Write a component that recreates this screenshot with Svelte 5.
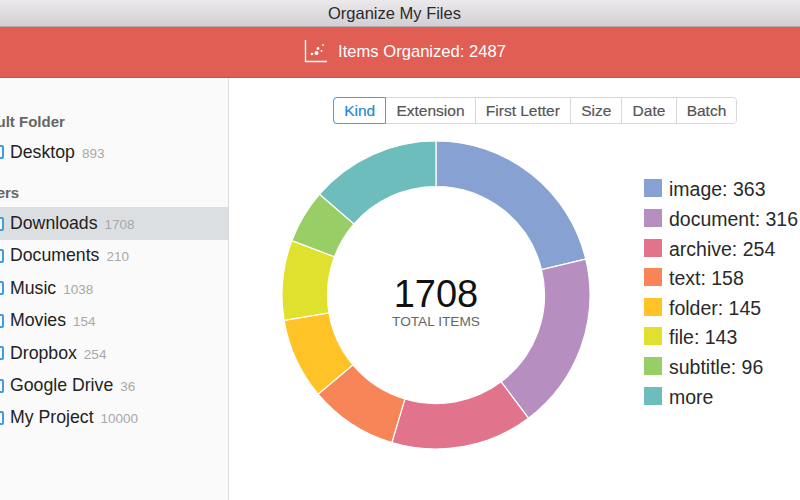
<script lang="ts">
	const kinds = [
		{ label: 'image: 363', n: 363, color: '#87a1d3' },
		{ label: 'document: 316', n: 316, color: '#b68ec0' },
		{ label: 'archive: 254', n: 254, color: '#e2738c' },
		{ label: 'text: 158', n: 158, color: '#f78557' },
		{ label: 'folder: 145', n: 145, color: '#ffc327' },
		{ label: 'file: 143', n: 143, color: '#e0e02f' },
		{ label: 'subtitle: 96', n: 96, color: '#99cd65' },
		{ label: 'more', n: 233, color: '#6cbdbc' }
	];
	const tabs = ['Kind', 'Extension', 'First Letter', 'Size', 'Date', 'Batch'];
	const folders = [
		{ name: 'Downloads', count: 1708, active: true },
		{ name: 'Documents', count: 210 },
		{ name: 'Music', count: 1038 },
		{ name: 'Movies', count: 154 },
		{ name: 'Dropbox', count: 254 },
		{ name: 'Google Drive', count: 36 },
		{ name: 'My Project', count: 10000 }
	];

	const total = 1708;
	const C = 155;
	const R = 154;
	const r = 108.5;

	function pt(rad: number, deg: number) {
		const a = (deg * Math.PI) / 180;
		return `${(C + rad * Math.sin(a)).toFixed(2)} ${(C - rad * Math.cos(a)).toFixed(2)}`;
	}

	let acc = 0;
	const slices = kinds.map((k) => {
		const from = (acc / total) * 360;
		acc += k.n;
		const to = (acc / total) * 360;
		const large = to - from > 180 ? 1 : 0;
		return {
			color: k.color,
			d: `M${pt(R, from)} A${R} ${R} 0 ${large} 1 ${pt(R, to)} L${pt(r, to)} A${r} ${r} 0 ${large} 0 ${pt(r, from)} Z`
		};
	});
</script>

<div class="window">
	<header class="titlebar">Organize My Files</header>
	<div class="banner">
		<svg class="scatter" width="24" height="24" viewBox="0 0 24 24">
			<path d="M1.5 1v21.5H23" fill="none" stroke="#fff" stroke-width="1.4" />
			<circle cx="8" cy="15" r="1.3" fill="#fff" />
			<circle cx="12.5" cy="14" r="2" fill="#fff" />
			<circle cx="14" cy="9.5" r="1.4" fill="#fff" />
			<circle cx="17.5" cy="12" r="0.9" fill="#fff" />
			<circle cx="19" cy="6" r="0.9" fill="#fff" />
		</svg>
		<span>Items Organized: 2487</span>
	</div>
	<div class="body">
		<aside class="sidebar">
			<h3 class="default-head">Default Folder</h3>
			<div class="row">
				<i class="box"></i><span class="name">Desktop</span><span class="count">893</span>
			</div>
			<h3 class="folders-head">Folders</h3>
			{#each folders as f}
				<div class="row" class:active={f.active}>
					<i class="box"></i><span class="name">{f.name}</span><span class="count">{f.count}</span>
				</div>
			{/each}
		</aside>
		<main class="content">
			<div class="tabs">
				{#each tabs as t, i}
					<button class="tab" class:on={i === 0}>{t}</button>
				{/each}
			</div>
			<div class="chart-row">
				<div class="donut">
					<svg width="310" height="310" viewBox="0 0 310 310">
						{#each slices as s}
							<path d={s.d} fill={s.color} stroke="#fff" stroke-width="1.2" />
						{/each}
					</svg>
					<div class="center">
						<span class="big">1708</span>
						<span class="small">TOTAL ITEMS</span>
					</div>
				</div>
				<ul class="legend">
					{#each kinds as k}
						<li><i style="background: {k.color}"></i><span>{k.label}</span></li>
					{/each}
				</ul>
			</div>
		</main>
	</div>
</div>

<style>
	:global(body) {
		margin: 0;
		background: #fff;
	}
	.window {
		width: 800px;
		height: 500px;
		overflow: hidden;
		display: flex;
		flex-direction: column;
		font-family: 'Liberation Sans', Arial, sans-serif;
		color: #222;
	}
	.titlebar {
		height: 27px;
		flex: none;
		box-sizing: border-box;
		padding-right: 11px;
		display: flex;
		align-items: center;
		justify-content: center;
		font-size: 16.5px;
		color: #2b2b2b;
		background: linear-gradient(#ebe9eb, #d2d0d2);
		border-bottom: 1px solid #b5b0ae;
	}
	.banner {
		height: 51px;
		flex: none;
		box-sizing: border-box;
		display: flex;
		align-items: center;
		justify-content: center;
		gap: 10px;
		padding-left: 10px;
		background: #e05e54;
		border-bottom: 1px solid #cf5148;
		color: #fff;
		font-size: 16.6px;
	}
	.scatter {
		margin-top: -2px;
	}
	.body {
		flex: 1;
		display: flex;
		min-height: 0;
	}
	.sidebar {
		width: 229px;
		flex: none;
		box-sizing: border-box;
		overflow: hidden;
		background: #fafafa;
		border-right: 1px solid #dcdcdc;
	}
	h3 {
		margin: 0;
		font-size: 15px;
		font-weight: bold;
		color: #666;
		white-space: nowrap;
		line-height: 16px;
	}
	.default-head {
		margin: 36px 0 0 -36px;
	}
	.folders-head {
		margin: 17px 0 6px -35px;
	}
	.row {
		height: 32.4px;
		display: flex;
		align-items: center;
		white-space: nowrap;
	}
	.default-head + .row {
		margin-top: 6px;
	}
	.row.active {
		background: #dcdfe2;
	}
	.box {
		width: 10px;
		height: 10px;
		flex: none;
		margin-left: -10px;
		margin-right: 6px;
		border: 2px solid #3f9ce0;
		border-radius: 2px;
		background: #fff;
	}
	.name {
		font-size: 17.7px;
		color: #222;
	}
	.count {
		font-size: 13.5px;
		color: #a8a8a8;
		margin-left: 7px;
		margin-top: 2px;
	}
	.content {
		flex: 1;
		min-width: 0;
		padding: 19px 0 0 52px;
	}
	.tabs {
		display: inline-flex;
		margin-left: 52px;
		height: 27px;
		box-sizing: border-box;
		border: 1px solid #d6d8da;
		border-radius: 4px;
		vertical-align: top;
	}
	.tab {
		appearance: none;
		background: #fff;
		border: none;
		border-left: 1px solid #d6d8da;
		padding: 0 10.15px;
		margin: 0;
		font: inherit;
		font-size: 15.5px;
		color: #555;
		-webkit-text-stroke: 0.2px #555;
	}
	.tab:first-child {
		border-left: none;
		border-radius: 3px 0 0 3px;
	}
	.tab:last-child {
		border-radius: 0 3px 3px 0;
	}
	.tab.on {
		color: #2a87d8;
		-webkit-text-stroke: 0.2px #2a87d8;
		outline: 1px solid #4a9de0;
		outline-offset: 0;
		position: relative;
	}
	.chart-row {
		display: flex;
		align-items: center;
		margin-top: 16px;
	}
	.donut {
		display: grid;
		flex: none;
		width: 310px;
		height: 310px;
	}
	.donut > * {
		grid-area: 1 / 1;
	}
	.center {
		display: flex;
		flex-direction: column;
		align-items: center;
		justify-content: center;
		padding-top: 12px;
		box-sizing: border-box;
	}
	.big {
		font-size: 38px;
		line-height: 40px;
		color: #111;
	}
	.small {
		font-size: 13.7px;
		line-height: 15px;
		color: #666;
	}
	.legend {
		list-style: none;
		margin: 0 0 6px 53px;
		padding: 0;
		display: flex;
		flex-direction: column;
		flex: none;
	}
	.legend li {
		height: 29.6px;
		display: flex;
		align-items: center;
		gap: 7px;
		font-size: 19.5px;
		white-space: nowrap;
		color: #2a2a2a;
	}
	.legend span {
		padding-top: 3px;
	}
	.legend i {
		width: 18px;
		height: 18px;
		flex: none;
	}
</style>
